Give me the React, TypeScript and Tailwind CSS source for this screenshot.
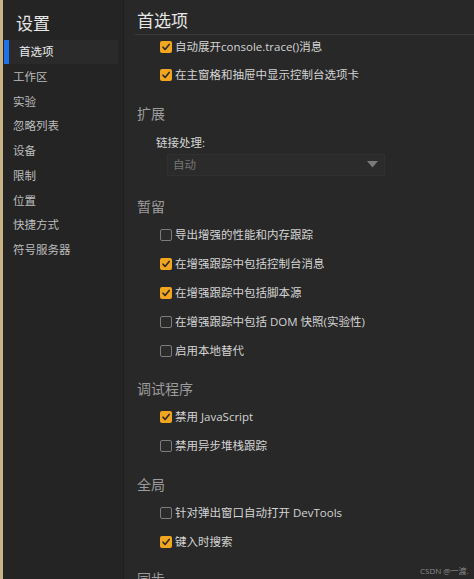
import React from "react";

const FONT = '"Open Sans","Noto Sans CJK SC",sans-serif';

function Check({ checked }: { checked: boolean }) {
  if (checked) {
    return (
      <span className="w-[12px] h-[12px] rounded-[2px] bg-[#f2a51f] flex items-center justify-center shrink-0">
        <svg width="10" height="10" viewBox="0 0 10 10">
          <path d="M2 5.2 L4.1 7.4 L8.2 2.4" fill="none" stroke="#2a2a2a" strokeWidth="1.6" strokeLinecap="round" strokeLinejoin="round" />
        </svg>
      </span>
    );
  }
  return <span className="w-[12px] h-[12px] rounded-[2px] border border-[#7c7c7c] bg-[#2b2b2b] shrink-0" />;
}

function Item({ checked, label, h = "h-[29px]" }: { checked: boolean; label: string; h?: string }) {
  return (
    <div className={`${h} flex items-center gap-[3px] pl-[160px] text-[11.5px] text-[#d4d4d4] whitespace-nowrap`}>
      <Check checked={checked} />
      <span>{label}</span>
    </div>
  );
}

function Section({ title, mt }: { title: string; mt: string }) {
  return (
    <div className={`${mt} h-[20px] flex items-center pl-[137px] text-[14px] text-[#9c9c9c]`}>{title}</div>
  );
}

export default function App() {
  const side = ["工作区", "实验", "忽略列表", "设备", "限制", "位置", "快捷方式", "符号服务器"];
  return (
    <div className="relative w-[474px] h-[579px] flex overflow-hidden bg-[#282828]" style={{ fontFamily: FONT }}>
      <div className="w-[3px] bg-[#c7b487] shrink-0" />
      <div className="w-[121px] shrink-0 bg-[#242424] border-r border-[#1f1f1f] flex flex-col">
        <div className="h-[40px] flex items-center pl-[13px] pt-[8px] text-[17px] text-[#e8e8e8]">设置</div>
        <div className="h-[24px] flex items-center">
          <div className="w-[5px] h-full bg-[#1a73e8] ml-[1px]" />
          <div className="h-full w-[109px] bg-[#2a2a2a] flex items-center pl-[10px] text-[11.5px] text-[#ececec]">首选项</div>
        </div>
        {side.map((s) => (
          <div key={s} className="h-[24.75px] flex items-center pl-[10px] text-[11.5px] text-[#bcbcbc]">
            {s}
          </div>
        ))}
      </div>
      <div className="flex-1 flex flex-col">
        <div className="h-[37px] flex items-center ml-[11px] pl-[2px] border-b border-[#3a3a3a] text-[17px] text-[#e6e6e6] pt-[8px]">
          首选项
        </div>
        <div className="flex flex-col -ml-[124px] pt-[3px]">
          <Item checked label="自动展开console.trace()消息" h="h-[18px]" />
          <div className="mt-[10px]">
            <Item checked label="在主窗格和抽屉中显示控制台选项卡" h="h-[18px]" />
          </div>
          <Section title="扩展" mt="mt-[20px]" />
          <div className="mt-[10px] h-[18px] flex items-center pl-[156px] text-[11.5px] text-[#d4d4d4]">链接处理:</div>
          <div className="mt-[2px] ml-[167px] w-[218px] h-[22px] bg-[#2b2b2b] border border-[#303030] flex items-center justify-between pl-[5px] pr-[6px]">
            <span className="text-[11.5px] text-[#767676]">自动</span>
            <svg width="11" height="7" viewBox="0 0 11 7">
              <path d="M0 0 L11 0 L5.5 6.5 Z" fill="#7a7a7a" />
            </svg>
          </div>
          <Section title="暂留" mt="mt-[21px]" />
          <div className="mt-[4px] flex flex-col">
            <Item checked={false} label="导出增强的性能和内存跟踪" />
            <Item checked label="在增强跟踪中包括控制台消息" />
            <Item checked label="在增强跟踪中包括脚本源" />
            <Item checked={false} label="在增强跟踪中包括 DOM 快照(实验性)" />
            <Item checked={false} label="启用本地替代" />
          </div>
          <Section title="调试程序" mt="mt-[13px]" />
          <div className="mt-[4px] flex flex-col">
            <Item checked label="禁用 JavaScript" />
            <Item checked={false} label="禁用异步堆栈跟踪" />
          </div>
          <Section title="全局" mt="mt-[14px]" />
          <div className="mt-[4px] flex flex-col">
            <Item checked={false} label="针对弹出窗口自动打开 DevTools" />
            <Item checked label="键入时搜索" />
          </div>
          <Section title="同步" mt="mt-[12px]" />
        </div>
      </div>
      <div className="absolute left-[420px] top-[565px] text-[8px] text-[#8a8a8a] whitespace-nowrap">CSDN @一渡.</div>
    </div>
  );
}
